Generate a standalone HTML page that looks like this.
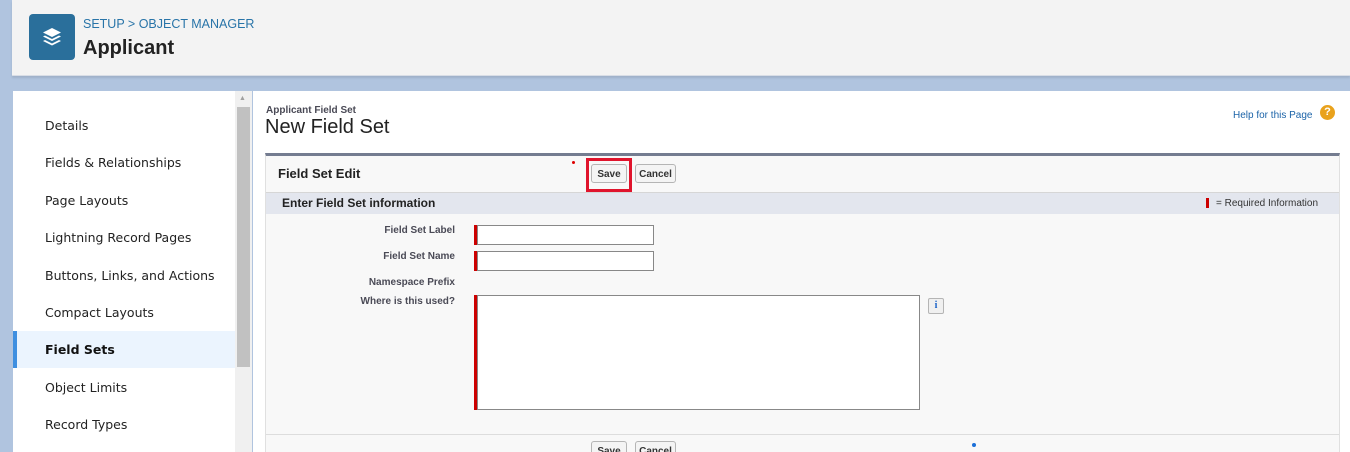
<!DOCTYPE html>
<html style="overflow:hidden"><head><style>
html,body{margin:0;width:1350px;height:452px;overflow:hidden}
body{background:#b0c4df;font-family:"Liberation Sans",Arial,sans-serif;position:relative}
.hdr{position:absolute;left:12px;top:0;width:1338px;height:75px;background:#f3f3f3;border-bottom:1px solid #d8dde6;box-shadow:0 2px 2px rgba(0,0,0,.1)}
.ico{position:absolute;left:17px;top:14px;width:46px;height:46px;background:#2a6f9b;border-radius:4px}
.bc{position:absolute;left:71px;top:17px;font-size:12.5px;color:#2874a8}
.ttl{position:absolute;left:71px;top:37px;font-size:20px;font-weight:bold;color:#222}
.side{position:absolute;left:13px;top:91px;width:222px;height:361px;background:#fff}
.side div{position:absolute;left:0;width:222px;height:37px;line-height:37px;padding-left:32px;box-sizing:border-box;color:#222;font-family:"DejaVu Sans","Liberation Sans",sans-serif;font-size:12.5px}
.side .act{background:#ebf4fe;border-left:4px solid #3f8fe0;padding-left:28px;font-weight:bold;color:#111}
.sb{position:absolute;left:235px;top:91px;width:17px;height:361px;background:#f0f0f0}
.sb i{position:absolute;left:2px;top:16px;width:13px;height:260px;background:#c1c1c1}
.main{position:absolute;left:253px;top:91px;width:1097px;height:361px;background:#fff;overflow:hidden}
.panel{position:absolute;left:12px;top:62px;width:1075px;height:300px;background:#f8f8f8;border-top:3px solid #747c90;border-left:1px solid #e0e0e0;border-right:1px solid #e0e0e0;box-sizing:border-box}
.btn{position:absolute;height:19px;border:1px solid #b5b5b5;border-radius:3px;background:#f4f4f4;font-size:10px;font-weight:bold;color:#333;line-height:19px;text-align:center;box-sizing:border-box}
.lbl{position:absolute;right:884px;font-size:10px;font-weight:bold;color:#4a4a56;text-align:right;white-space:nowrap}
.req{position:absolute;width:3px;background:#c00}
.inp{position:absolute;background:#fff;border:1px solid #888;box-sizing:border-box}
</style></head><body>
<div class="hdr">
<div class="ico"><svg width="46" height="46" viewBox="0 0 46 46"><g fill="#fff"><path d="M23 14l9 4.5-9 4.5-9-4.5z"/><path d="M14 22.5l2-1 7 3.5 7-3.5 2 1-9 4.5z"/><path d="M14 27l2-1 7 3.5 7-3.5 2 1-9 4.5z"/></g></svg></div>
<div class="bc">SETUP &gt; OBJECT MANAGER</div>
<div class="ttl">Applicant</div>
</div>
<div class="side">
<div style="top:16px">Details</div>
<div style="top:53px">Fields &amp; Relationships</div>
<div style="top:91px">Page Layouts</div>
<div style="top:128px">Lightning Record Pages</div>
<div style="top:166px">Buttons, Links, and Actions</div>
<div style="top:203px">Compact Layouts</div>
<div class="act" style="top:240px">Field Sets</div>
<div style="top:278px">Object Limits</div>
<div style="top:315px">Record Types</div>
</div>
<div class="sb"><span style="position:absolute;left:4px;top:4px;font-size:7px;color:#a0a0a0">▲</span><i></i></div>
<div class="main">
<div style="position:absolute;left:13px;top:14px;font-size:10px;font-weight:bold;color:#4a4a56">Applicant Field Set</div>
<div style="position:absolute;left:12px;top:25px;font-size:20px;color:#222">New Field Set</div>
<div style="position:absolute;left:980px;top:19px;font-size:10px;color:#1b63a8">Help for this Page</div>
<div style="position:absolute;left:1067px;top:14px;width:15px;height:15px;border-radius:50%;background:#e9a21c;color:#fff;font-size:11px;font-weight:bold;text-align:center;line-height:15px">?</div>
<div class="panel">
<div style="position:absolute;left:12px;top:10px;font-size:13px;font-weight:bold;color:#222">Field Set Edit</div>
<div style="position:absolute;left:306px;top:5px;width:3px;height:3px;background:#d00;border-radius:50%"></div>
<div style="position:absolute;left:320px;top:2px;width:46px;height:34px;border:3px solid #e0142c;box-sizing:border-box"></div>
<div class="btn" style="left:325px;top:8px;width:36px;">Save</div>
<div class="btn" style="left:369px;top:8px;width:41px;">Cancel</div>
<div style="position:absolute;left:0;top:36px;width:100%;height:21px;background:#e3e6ee;border-top:1px solid #d6d6d6"></div>
<div style="position:absolute;left:16px;top:40px;font-size:12px;font-weight:bold;color:#222">Enter Field Set information</div>
<div class="req" style="left:940px;top:42px;height:10px"></div>
<div style="position:absolute;left:950px;top:42px;font-size:10px;color:#333">= Required Information</div>
<div class="lbl" style="top:69px">Field Set Label</div>
<div class="req" style="left:208px;top:69px;height:20px"></div>
<div class="inp" style="left:211px;top:69px;width:177px;height:20px"></div>
<div class="lbl" style="top:95px">Field Set Name</div>
<div class="req" style="left:208px;top:95px;height:20px"></div>
<div class="inp" style="left:211px;top:95px;width:177px;height:20px"></div>
<div class="lbl" style="top:121px">Namespace Prefix</div>
<div class="lbl" style="top:140px">Where is this used?</div>
<div class="req" style="left:208px;top:139px;height:115px"></div>
<div class="inp" style="left:211px;top:139px;width:443px;height:115px"></div>
<div style="position:absolute;left:662px;top:142px;width:14px;height:14px;border:1px solid #b5b5b5;border-radius:2px;background:#f0f0f0;font-size:10px;font-weight:bold;color:#1b63c8;text-align:center;line-height:14px;font-family:'Liberation Serif',serif">i</div>
<div style="position:absolute;left:0;top:278px;width:100%;border-top:1px solid #ddd"></div>
<div class="btn" style="left:325px;top:285px;width:36px;">Save</div>
<div class="btn" style="left:369px;top:285px;width:41px;">Cancel</div>
<div style="position:absolute;left:706px;top:287px;width:4px;height:4px;background:#1b6fd8;border-radius:50%"></div>
</div>
</div>
</body></html>
